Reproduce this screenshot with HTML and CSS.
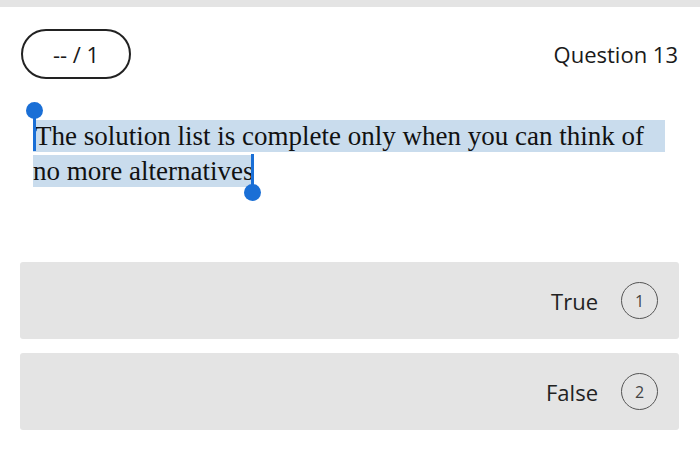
FILE: index.html
```html
<!DOCTYPE html>
<html>
<head>
<meta charset="utf-8">
<link rel="stylesheet" href="styles.css">
</head>
<body>
<div class="topbar"></div>
<div class="header">
  <div class="pill">-- / 1</div>
  <div class="qnum">Question 13</div>
</div>
<div class="question">
  <div class="sel-line first"><span class="handle start"></span>The solution list is complete only when you can think of</div>
  <div class="sel-row"><span class="sel-line second">no more alternatives<span class="handle end"></span></span></div>
</div>
<div class="options">
  <div class="option"><span class="label">True</span><span class="num">1</span></div>
  <div class="option"><span class="label">False</span><span class="num">2</span></div>
</div>
</body>
</html>
```

FILE: styles.css
```css
html, body {
  margin: 0;
  padding: 0;
  background: #ffffff;
  width: 700px;
  height: 449px;
  overflow: hidden;
}
body {
  font-family: "Open Sans", "Noto Sans", sans-serif;
  color: #1a1a1a;
}
.topbar {
  height: 7px;
  background: #e4e4e4;
}
.header {
  display: flex;
  justify-content: space-between;
  align-items: center;
  padding: 22px 22px 0 21px;
}
.pill {
  box-sizing: border-box;
  width: 110px;
  height: 50px;
  border: 2px solid #222;
  border-radius: 25px;
  display: flex;
  align-items: center;
  justify-content: center;
  font-size: 22px;
  font-weight: 500;
  color: #1a1a1a;
}
.qnum {
  font-size: 22px;
  font-weight: 500;
  color: #1a1a1a;
}
.question {
  margin: 41px 30px 0 33px;
  font-family: "Liberation Serif", "Times New Roman", serif;
  font-size: 27px;
  color: #111;
}
.sel-line {
  position: relative;
  background: #c9dced;
  line-height: 32px;
  height: 32px;
  white-space: nowrap;
}
.first {
  padding-left: 2px;
  width: 630px;
}
.sel-row {
  margin-top: 3px;
  height: 32px;
}
.second {
  display: inline-block;
}
.handle {
  position: absolute;
  width: 3px;
  background: #1a6fd6;
}
.handle::after {
  content: "";
  position: absolute;
  width: 17px;
  height: 17px;
  border-radius: 50%;
  background: #1a6fd6;
  left: -7px;
}
.handle.start {
  left: 0;
  top: -10px;
  height: 41px;
}
.handle.start::after {
  top: -8px;
}
.handle.end {
  right: -1px;
  top: -1px;
  height: 34px;
}
.handle.end::after {
  top: 30px;
}
.options {
  margin: 75px 21px 0 20px;
  display: flex;
  flex-direction: column;
  gap: 14px;
}
.option {
  height: 77px;
  background: #e4e4e4;
  border-radius: 3px;
  display: flex;
  align-items: center;
  justify-content: flex-end;
  padding-right: 21px;
}
.label {
  font-size: 22px;
  font-weight: 500;
  color: #222;
  margin-right: 23px;
}
.num {
  box-sizing: border-box;
  width: 37px;
  height: 37px;
  border: 1.6px solid #555;
  border-radius: 50%;
  display: flex;
  align-items: center;
  justify-content: center;
  font-size: 16px;
  color: #444;
}
```
